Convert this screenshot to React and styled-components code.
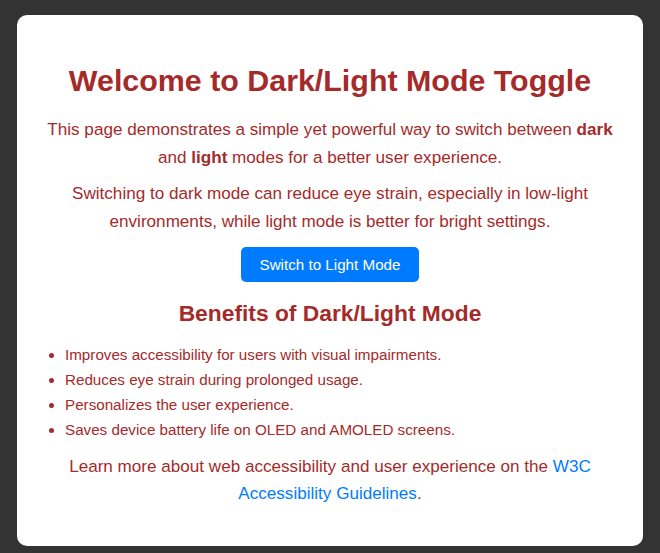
import React from 'react';
import styled, { createGlobalStyle } from 'styled-components';

const GlobalStyle = createGlobalStyle`
  html, body {
    margin: 0;
    padding: 0;
    background: #333333;
  }
  body {
    font-family: "Liberation Sans", Arial, sans-serif;
    padding: 15px 17px 7px;
  }
`;

const Card = styled.div`
  background: #ffffff;
  border-radius: 10px;
  padding: 26px 30px 30px;
  color: #a52a2a;
  text-align: center;
  box-sizing: border-box;
  height: 531px;
`;

const Title = styled.h1`
  font-size: 30.4px;
  font-weight: bold;
  margin: 21px 0 17px;
  line-height: 37px;
`;

const Text = styled.p`
  font-size: 17.1px;
  line-height: 27.5px;
  margin: 0 0 9px;
  b {
    font-weight: bold;
  }
`;

const Toggle = styled.button`
  font-family: "Liberation Sans", Arial, sans-serif;
  font-size: 15.2px;
  color: #ffffff;
  background: #007bff;
  border: none;
  border-radius: 5px;
  padding: 8px 19px;
  height: 35px;
  margin: 3px 0 0;
  cursor: pointer;
`;

const Subtitle = styled.h2`
  font-size: 22.8px;
  font-weight: bold;
  margin: 17px 0 14.5px;
  line-height: 28px;
`;

const Benefits = styled.ul`
  text-align: left;
  margin: 0 0 11px;
  padding-left: 18px;
  font-size: 15.2px;
  line-height: 25px;
`;

const Link = styled.a`
  color: #007bff;
  text-decoration: none;
`;

export default function App() {
  return (
    <>
      <GlobalStyle />
      <Card>
        <Title>Welcome to Dark/Light Mode Toggle</Title>
        <Text>
          This page demonstrates a simple yet powerful way to switch between <b>dark</b> and{' '}
          <b>light</b> modes for a better user experience.
        </Text>
        <Text>
          Switching to dark mode can reduce eye strain, especially in low-light environments, while
          light mode is better for bright settings.
        </Text>
        <Toggle>Switch to Light Mode</Toggle>
        <Subtitle>Benefits of Dark/Light Mode</Subtitle>
        <Benefits>
          <li>Improves accessibility for users with visual impairments.</li>
          <li>Reduces eye strain during prolonged usage.</li>
          <li>Personalizes the user experience.</li>
          <li>Saves device battery life on OLED and AMOLED screens.</li>
        </Benefits>
        <Text>
          Learn more about web accessibility and user experience on the{' '}
          <Link href="#">W3C Accessibility Guidelines</Link>.
        </Text>
      </Card>
    </>
  );
}
